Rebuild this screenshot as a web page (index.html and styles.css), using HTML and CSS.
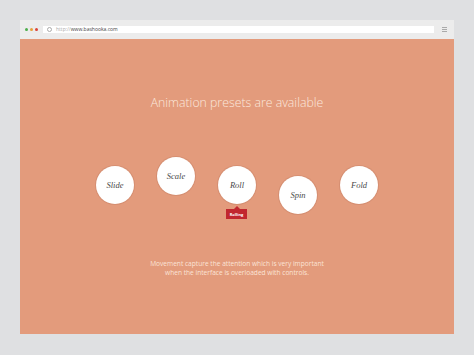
FILE: index.html
```html
<!DOCTYPE html>
<html>
<head>
<meta charset="utf-8">
<link rel="stylesheet" href="styles.css">
</head>
<body>
<div class="window">
  <div class="toolbar">
    <div class="dots"><span class="dot g"></span><span class="dot y"></span><span class="dot r"></span></div>
    <div class="address"><span class="reload"></span><span class="proto">http://</span><span class="host">www.bashooka.com</span></div>
    <div class="menu"><span></span><span></span><span></span></div>
  </div>
  <div class="content">
    <h1 class="title">Animation presets are available</h1>
    <div class="presets">
      <div class="preset p-slide"><div class="circle">Slide</div></div>
      <div class="preset p-scale"><div class="circle">Scale</div></div>
      <div class="preset p-roll"><div class="circle">Roll</div><div class="tip">Rolling</div></div>
      <div class="preset p-spin"><div class="circle">Spin</div></div>
      <div class="preset p-fold"><div class="circle">Fold</div></div>
    </div>
    <p class="desc">Movement capture the attention which is very important<br>when the interface is overloaded with controls.</p>
  </div>
</div>
</body>
</html>
```
FILE: styles.css
```css
html, body { margin: 0; padding: 0; }
body {
  background: #dfe0e2;
  width: 474px;
  height: 355px;
  padding: 20px 20px 0 20px;
  box-sizing: border-box;
  font-family: "Open Sans", sans-serif;
}
.window {
  width: 434px;
  background: #e39b7c;
}
.toolbar {
  height: 19px;
  background: #ececec;
  display: flex;
  align-items: center;
  padding: 0 6px 0 5px;
}
.dots { display: flex; gap: 2px; width: 18px; }
.dot { width: 3px; height: 3px; border-radius: 50%; display: block; }
.dot.g { background: #4cae4c; }
.dot.y { background: #e8a13a; }
.dot.r { background: #d9433a; }
.address {
  flex: 1;
  height: 7px;
  background: #fff;
  display: flex;
  align-items: center;
  font-size: 5px;
  line-height: 7px;
  color: #333;
  padding-left: 4px;
}
.reload {
  width: 3px; height: 3px; border: 0.6px solid #aaa; border-radius: 50%;
  margin-right: 4px;
}
.proto { color: #aaa; }
.host { color: #444; }
.menu { width: 8px; margin-left: 6px; display: flex; flex-direction: column; gap: 1px; align-items: center; }
.menu span { width: 5px; height: 1px; background: #aaa; display: block; }
.content {
  height: 295px;
  display: flex;
  flex-direction: column;
  align-items: center;
}
.title {
  margin: 56px 0 0 0;
  font-weight: 300;
  font-size: 12.3px;
  line-height: 16px;
  color: #fbe8dd;
}
.presets {
  display: flex;
  gap: 23px;
  align-items: flex-start;
  margin-top: 55px;
  height: 62px;
}
.preset { position: relative; }
.p-scale { margin-top: -9px; }
.p-spin { margin-top: 10px; }
.circle {
  width: 38px;
  height: 38px;
  border-radius: 50%;
  background: #fff;
  box-shadow: 0 0 0 1px rgba(190,120,95,0.35);
  display: flex;
  align-items: center;
  justify-content: center;
  font-family: "Liberation Serif", serif;
  font-style: italic;
  font-size: 8.5px;
  color: #4a4a4a;
}
.tip {
  position: absolute;
  left: 8px;
  top: 43px;
  width: 21px;
  height: 10px;
  background: #c1272f;
  color: #fff;
  font-size: 4px;
  font-weight: 700;
  display: flex;
  align-items: center;
  justify-content: center;
}
.tip::before {
  content: "";
  position: absolute;
  top: -3px;
  left: 7.5px;
  border-left: 3px solid transparent;
  border-right: 3px solid transparent;
  border-bottom: 3px solid #c1272f;
}
.desc {
  margin: 31px 0 0 0;
  text-align: center;
  font-size: 6.6px;
  line-height: 9px;
  color: #fbe3d6;
}
```
